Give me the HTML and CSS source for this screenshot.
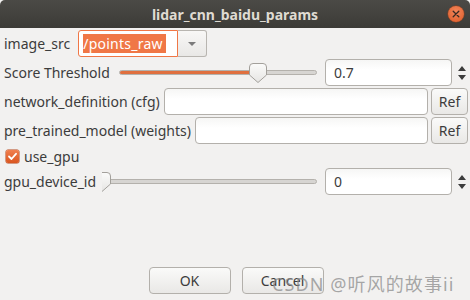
FILE: index.html
```html
<!DOCTYPE html>
<html>
<head>
<meta charset="utf-8">
<link rel="stylesheet" href="styles.css">
</head>
<body>
<div class="window">
  <div class="titlebar">
    <span class="title">lidar_cnn_baidu_params</span>
    <span class="close"><svg width="16" height="16" viewBox="0 0 16 16"><path d="M5.2 5.2 L10.8 10.8 M10.8 5.2 L5.2 10.8" stroke="#3a2a22" stroke-width="1.3" stroke-linecap="round"/></svg></span>
  </div>
  <div class="content">
    <div class="row r1">
      <span class="label">image_src</span>
      <div class="combo">
        <div class="combo-entry"><span class="sel">/points_raw</span></div>
        <div class="combo-btn"><svg width="10" height="6" viewBox="0 0 10 6"><path d="M1 1 L9 1 L5 5 Z" fill="#7b7b7b"/></svg></div>
      </div>
    </div>
    <div class="row r2">
      <span class="label">Score Threshold</span>
      <div class="slider s1">
        <div class="groove"><div class="fill" style="width:70%"></div></div>
        <svg class="handle" style="left:calc(70% - 9px)" width="18" height="20" viewBox="0 0 18 20"><defs><linearGradient id="hg" x1="0" y1="0" x2="0" y2="1"><stop offset="0" stop-color="#fbfbfa"/><stop offset="1" stop-color="#e6e5e3"/></linearGradient></defs><path d="M4 0.5 H14 A3.5 3.5 0 0 1 17.5 4 V12 L9 19.5 L0.5 12 V4 A3.5 3.5 0 0 1 4 0.5 Z" fill="url(#hg)" stroke="#a3a09b"/></svg>
      </div>
      <div class="spin"><span>0.7</span></div>
      <div class="arrows"><svg width="10" height="18" viewBox="0 0 10 18"><path d="M1 7 L9 7 L5 2 Z M1 11 L9 11 L5 16 Z" fill="#3c3c3c"/></svg></div>
    </div>
    <div class="row r3">
      <span class="label">network_definition (cfg)</span>
      <div class="entry"></div>
      <div class="btn ref">Ref</div>
    </div>
    <div class="row r4">
      <span class="label">pre_trained_model (weights)</span>
      <div class="entry"></div>
      <div class="btn ref">Ref</div>
    </div>
    <div class="row r5">
      <span class="check"><svg width="13" height="13" viewBox="0 0 13 13"><path d="M3 6.5 L5.5 9 L10 3.8" fill="none" stroke="#fff" stroke-width="1.8" stroke-linecap="round" stroke-linejoin="round"/></svg></span>
      <span class="label">use_gpu</span>
    </div>
    <div class="row r6">
      <span class="label">gpu_device_id</span>
      <div class="slider s2">
        <div class="groove"></div>
        <svg class="handle h2" width="18" height="20" viewBox="0 0 18 20"><path d="M4 0.5 H14 A3.5 3.5 0 0 1 17.5 4 V12 L9 19.5 L0.5 12 V4 A3.5 3.5 0 0 1 4 0.5 Z" fill="url(#hg)" stroke="#a3a09b"/></svg>
      </div>
      <div class="spin"><span>0</span></div>
      <div class="arrows"><svg width="10" height="18" viewBox="0 0 10 18"><path d="M1 7 L9 7 L5 2 Z M1 11 L9 11 L5 16 Z" fill="#3c3c3c"/></svg></div>
    </div>
    <div class="buttons">
      <div class="btn big">OK</div>
      <div class="btn big">Cancel</div>
    </div>
  </div>
  <div class="watermark">CSDN @听风的故事ii</div>
</div>
</body>
</html>
```
FILE: styles.css
```css
html, body { margin: 0; padding: 0; }
body { width: 470px; height: 300px; overflow: hidden; background: #f2f1f0; font-family: "Noto Sans", "Noto Sans CJK SC", sans-serif; font-size: 14px; color: #3c3c3c; }
.window { position: relative; width: 470px; height: 300px; display: flex; flex-direction: column; }
.titlebar { height: 28px; flex: none; background: linear-gradient(#4b4a46, #3c3b37); border-radius: 5px 5px 0 0; display: flex; align-items: center; justify-content: center; position: relative; }
.title { color: #dfdbd2; font-weight: bold; font-size: 14px; }
.close { position: absolute; right: 6px; top: 6px; width: 16px; height: 16px; border-radius: 50%; background: radial-gradient(circle at 50% 35%, #f4865a, #dd5a27); box-shadow: 0 0 0 0.5px #9e3f17; display: block; }
.close svg { display: block; }
.content { flex: 1; display: flex; flex-direction: column; padding: 2px 0 0 4px; gap: 2px; }
.row { height: 27px; display: flex; align-items: center; flex: none; }
.label { white-space: nowrap; }
.combo { display: flex; height: 27px; margin-left: 8px; }
.combo-entry { width: 94px; height: 25px; border: 1px solid #f07746; border-radius: 3px 0 0 3px; background: #fff; display: flex; align-items: center; padding-left: 4px; }
.sel { background: #f07746; color: #fff; line-height: 19px; padding-right: 3px; letter-spacing: 0.25px; }
.combo-btn { width: 28px; height: 25px; border: 1px solid #b8b5b0; border-left: none; border-radius: 0 3px 3px 0; background: linear-gradient(#f8f7f6, #e9e8e6); display: flex; align-items: center; justify-content: center; }
.slider { position: relative; height: 20px; display: flex; align-items: center; margin-right: 8px; flex: 1; }
.s1 { margin-left: 9px; }
.s2 { margin-left: 6px; overflow: hidden; }
.groove { width: 100%; height: 3px; border: 1px solid #b4b1ac; border-radius: 3px; background: #d7d5d2; overflow: hidden; }
.fill { height: 100%; background: #e0703f; }
.handle { position: absolute; top: 0; }
.h2 { left: -9px; }
.spin { width: 117px; height: 25px; border: 1px solid #b3b0ab; border-radius: 4px; background: linear-gradient(#f6f6f5, #fff 40%); display: flex; align-items: center; padding-left: 8px; flex: none; }
.spin span { color: #3c3c3c; }
.arrows { width: 16px; display: flex; justify-content: center; margin-left: 2px; flex: none; }
.arrows svg { display: block; }
.entry { flex: 1; height: 25px; border: 1px solid #b3b0ab; border-radius: 4px; background: linear-gradient(#f6f6f5, #fff 40%); margin-left: 4px; }
.btn { border: 1px solid #b3b0ab; border-radius: 4px; background: linear-gradient(#fafaf9, #e9e8e6); display: flex; align-items: center; justify-content: center; box-sizing: border-box; }
.ref { width: 37px; height: 27px; margin-left: 3px; margin-right: 2px; }
.r5 { height: 18px; margin-top: 1px; margin-bottom: 1px; }
.check { width: 13px; height: 13px; border-radius: 2px; background: linear-gradient(#f1804f, #d9551f); box-shadow: 0 0 0 0.5px #b3461a; margin-left: 2px; margin-right: 5px; display: block; }
.check svg { display: block; }
.buttons { margin-top: auto; margin-bottom: 6px; display: flex; justify-content: center; gap: 11px; padding-right: 2px; }
.big { width: 82px; height: 27px; }
.watermark { position: absolute; left: 272px; top: 270px; font-size: 18px; letter-spacing: 1.1px; color: rgba(140,140,140,0.75); white-space: nowrap; }
```
